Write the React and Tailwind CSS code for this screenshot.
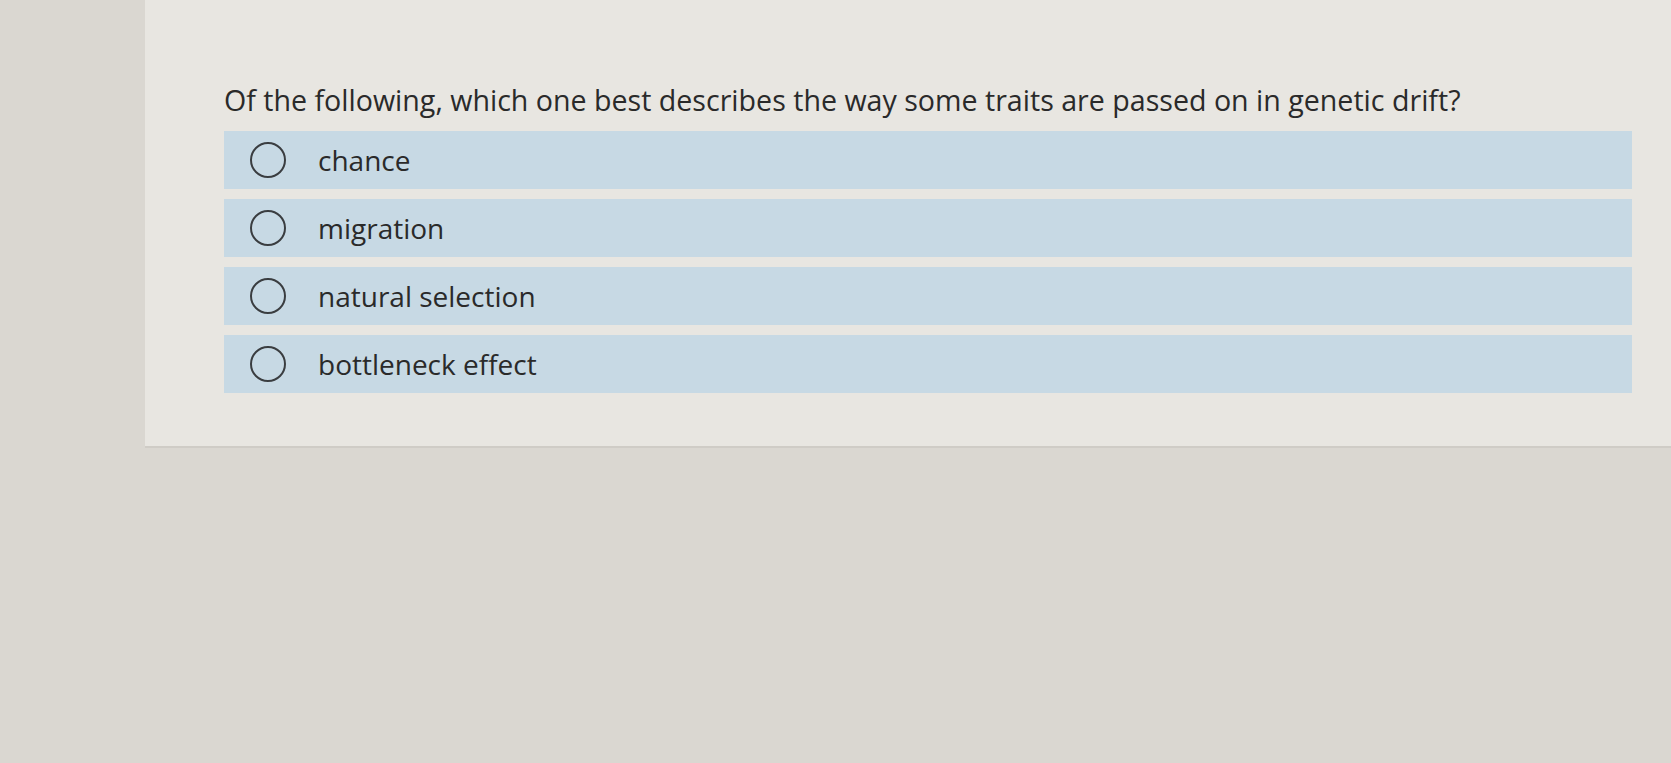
export default function App() {
  const options = ["chance", "migration", "natural selection", "bottleneck effect"];
  return (
    <div className="w-full h-[763px] bg-[#dad7d1] flex items-start overflow-hidden" style={{ fontFamily: "'Open Sans', 'Noto Sans', sans-serif" }}>
      <div className="ml-[145px] flex-1 h-[448px] bg-[#e8e6e1] border-b-2 border-[#cfccc6] pl-[79px] pr-[39px] pt-[80px]">
        <div className="text-[28.6px] leading-[40px] font-medium text-[#2a2a2a]">
          Of the following, which one best describes the way some traits are passed on in genetic drift?
        </div>
        <div className="mt-[11px] flex flex-col gap-[10px]">
          {options.map((o) => (
            <div key={o} className="h-[58px] bg-[#c7d9e4] flex items-center">
              <div className="ml-[26px] w-[36px] h-[36px] rounded-full border-2 border-[#3a3d40] bg-transparent"></div>
              <div className="ml-[32px] text-[28px] font-medium text-[#2a2a2a]">{o}</div>
            </div>
          ))}
        </div>
      </div>
    </div>
  );
}
